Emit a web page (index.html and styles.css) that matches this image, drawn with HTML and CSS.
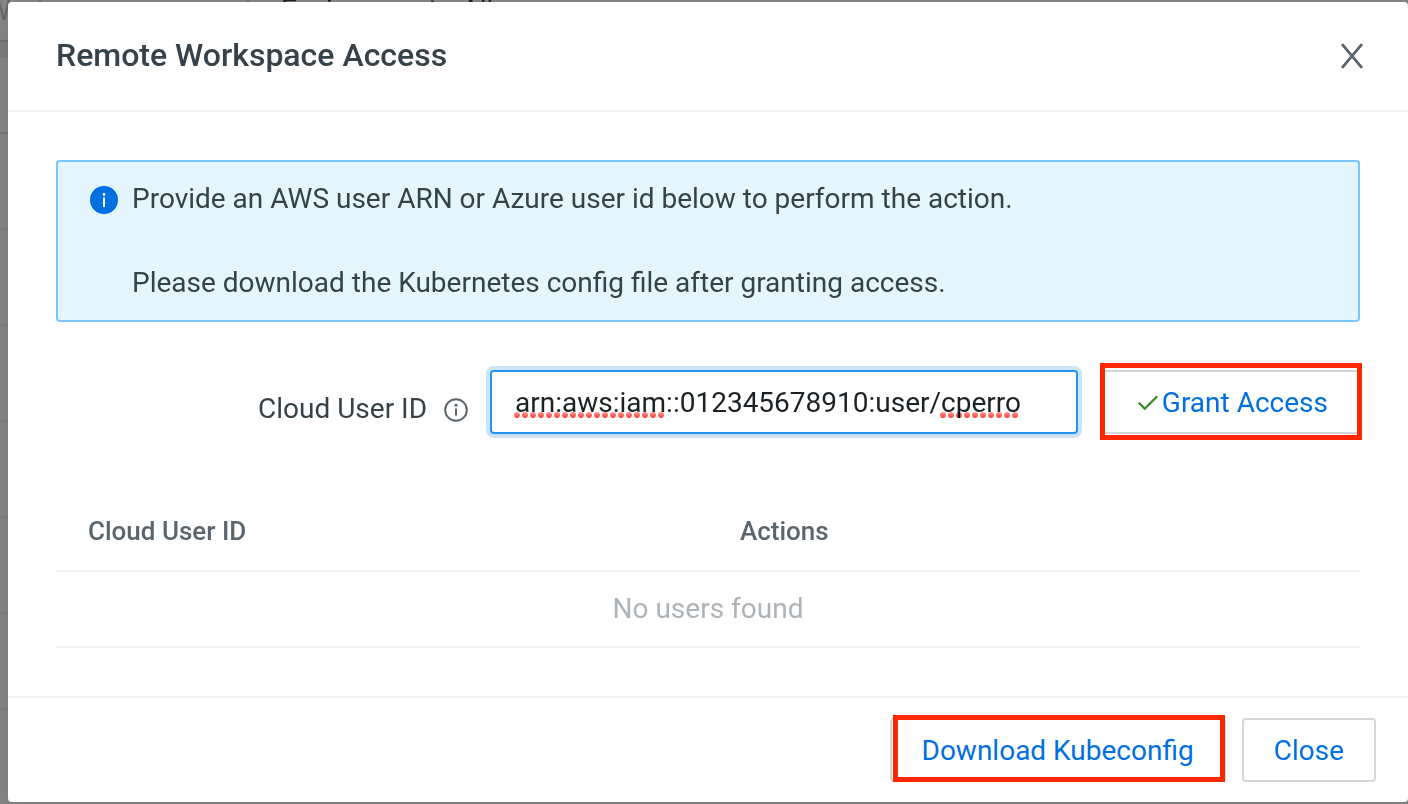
FILE: index.html
```
<!DOCTYPE html>
<html lang="en">

<head>
    <meta charset="UTF-8">
    <meta name="viewport" content="width=device-width, initial-scale=1.0">
    <title>Remote Workspace Access</title>
    <link rel="stylesheet" href="styles.css">
</head>

<body>

    <!-- Page behind the dialog -->
    <div class="page" aria-hidden="true">
        <div class="page-toolbar">
            <span class="search-hint">W</span>
            <span class="search-box"></span>
            <span class="env-filter"><span>Environment</span><span>All</span></span>
        </div>
        <div class="page-head"></div>
        <div class="page-row"></div>
        <div class="page-row"></div>
        <div class="page-row"></div>
        <div class="page-row"></div>
        <div class="page-row"></div>
        <div class="page-row"></div>
    </div>

    <div class="modal" role="dialog" aria-labelledby="modalTitle">
        <header class="modal-header">
            <h2 id="modalTitle">Remote Workspace Access</h2>
            <button class="close-icon" type="button" aria-label="Close dialog">
                <svg width="28" height="28" viewBox="0 0 28 28" fill="none" stroke="#5a656d" stroke-width="2.8">
                    <path d="M4 2.2L24 25.8M24 2.2L4 25.8" />
                </svg>
            </button>
        </header>

        <div class="modal-body">
            <div class="alert">
                <svg class="alert-icon" width="28" height="28" viewBox="0 0 28 28">
                    <circle cx="14" cy="14" r="14" fill="#0070e0" />
                    <circle cx="14" cy="8.5" r="1.4" fill="#fff" />
                    <rect x="13" y="11.5" width="2" height="9.5" fill="#fff" />
                </svg>
                <div class="alert-text">
                    <p>Provide an AWS user ARN or Azure user id below to perform the action.</p>
                    <p>Please download the Kubernetes config file after granting access.</p>
                </div>
            </div>

            <form class="grant-form">
                <label for="cloudUserId">Cloud User ID</label>
                <svg class="hint-icon" width="24" height="24" viewBox="0 0 24 24">
                    <circle cx="12" cy="12" r="10.8" fill="none" stroke="#5a656d" stroke-width="2" />
                    <circle cx="12" cy="7.3" r="1.5" fill="#5a656d" />
                    <rect x="11" y="10.6" width="2" height="7" fill="#5a656d" />
                </svg>
                <div class="input-wrap">
                    <input id="cloudUserId" type="text" value="arn:aws:iam::012345678910:user/cperro" spellcheck="false">
                    <svg class="misspelled" width="506" height="6" aria-hidden="true">
                        <defs>
                            <linearGradient id="dot" x1="0" y1="0" x2="0" y2="1">
                                <stop offset="0" stop-color="#ff9c96" />
                                <stop offset="1" stop-color="#fb3a30" />
                            </linearGradient>
                            <pattern id="dots" width="8" height="6" patternUnits="userSpaceOnUse">
                                <circle cx="3" cy="3" r="3" fill="url(#dot)" />
                            </pattern>
                        </defs>
                        <rect width="150" height="6" fill="url(#dots)" />
                        <rect width="78" height="6" fill="url(#dots)" transform="translate(426 0)" />
                    </svg>
                </div>
                <div class="highlight grant">
                    <button class="btn" type="button">
                        <svg width="20" height="16" viewBox="0 0 20 16" fill="none" stroke="#2f8a1f" stroke-width="2.2">
                            <path d="M.8 7.8L6.8 13.8L19.2 1.2" />
                        </svg>
                        Grant Access
                    </button>
                </div>
            </form>

            <table class="users">
                <thead>
                    <tr>
                        <th>Cloud User ID</th>
                        <th>Actions</th>
                    </tr>
                </thead>
                <tbody>
                    <tr>
                        <td colspan="2">No users found</td>
                    </tr>
                </tbody>
            </table>
        </div>

        <footer class="modal-footer">
            <div class="highlight download">
                <button class="btn" type="button">Download Kubeconfig</button>
            </div>
            <button class="btn" type="button">Close</button>
        </footer>
    </div>

</body>

</html>
```

FILE: styles.css
```
* {
    box-sizing: border-box;
}

body {
    font-family: Roboto, sans-serif;
    font-size: 28px;
    line-height: 42px;
    color: #36424a;
    background: #868686;
    margin: 0;
    padding: 2px 0 2px 8px;
    min-height: 100vh;
    overflow: hidden;
}

/* Dimmed page */
.page {
    position: absolute;
    inset: 0;
    overflow: hidden;
    background: #868686;
}

.page-toolbar {
    display: flex;
    height: 42px;
    border-bottom: 2px solid #717171;
    color: #666;
    line-height: 22px;
}

.search-hint {
    width: 54px;
    margin-left: -14px;
}

.search-box {
    width: 210px;
    margin-left: -1px;
    border: 2px solid #717171;
    border-width: 0 2px;
}

.env-filter {
    display: flex;
    gap: 24px;
    margin-left: 32px;
    line-height: 20px;
    color: #1c2125;
}

.page-head {
    height: 92px;
    border-top: 16px solid #7b7e7d;
    border-bottom: 2px solid #747474;
}

.page-row {
    height: 96px;
    border-bottom: 2px solid #7e7e7e;
}

/* Modal */
.modal {
    position: relative;
    background: white;
    border-radius: 4px;
    box-shadow: 0 8px 24px rgba(0, 0, 0, 0.1);
}

.modal-header {
    display: flex;
    justify-content: space-between;
    align-items: center;
    height: 110px;
    padding: 0 42px 0 48px;
    border-bottom: 2px solid #f4f4f4;
}

h2 {
    margin: 0;
    padding-bottom: 2px;
    font-size: 32px;
    font-weight: 500;
}

.close-icon {
    display: flex;
    padding: 0;
    border: none;
    background: none;
    cursor: pointer;
}

.modal-body {
    padding: 48px;
}

.alert {
    display: flex;
    gap: 14px;
    padding: 16px 32px;
    background: #e5f5fe;
    border: 2px solid #78c6fc;
    border-radius: 4px;
}

.alert-icon {
    flex: none;
    margin-top: 8px;
}

.alert p {
    margin: 0 0 42px;
}

.alert p:last-child {
    margin-bottom: 0;
}

/* Grant access form */
.grant-form {
    display: flex;
    align-items: center;
    margin-top: 48px;
    padding-left: 202px;
}

.grant-form label {
    margin-top: 14px;
}

.hint-icon {
    flex: none;
    margin: 16px 22px 0 17px;
}

.input-wrap {
    position: relative;
    flex: 1;
    margin-right: 24px;
}

.input-wrap input {
    display: block;
    width: 100%;
    height: 64px;
    padding: 0 23px;
    font: inherit;
    color: #1c2125;
    background: white;
    border: 2px solid #2492ef;
    border-radius: 4px;
    outline: none;
    box-shadow: 0 0 0 4px #cbe2f9;
}

.misspelled {
    position: absolute;
    left: 24px;
    top: 42px;
    mix-blend-mode: multiply;
}

.btn {
    display: flex;
    align-items: center;
    justify-content: center;
    gap: 4px;
    height: 64px;
    padding: 2px 30px 0;
    font: inherit;
    color: #0070e0;
    background: white;
    border: 2px solid #d5d7da;
    border-radius: 4px;
    cursor: pointer;
}

.grant .btn {
    padding-left: 34px;
}

/* Red frame over a button */
.highlight {
    position: relative;
}

.highlight::after {
    content: "";
    position: absolute;
    border: 5px solid #ff2600;
    pointer-events: none;
}

.grant::after {
    inset: -7px -2px -6px;
}

.download::after {
    inset: -3px 1px 0 3px;
}

/* Users table */
.users {
    width: 100%;
    margin-top: 58px;
    border-collapse: collapse;
    table-layout: fixed;
}

.users th {
    padding: 18px 32px;
    font-size: 26px;
    font-weight: 500;
    color: #5a656d;
    text-align: left;
    border-bottom: 2px solid #f4f4f4;
}

.users td {
    padding: 16px 32px;
    color: #aeb3b7;
    text-align: center;
    border-bottom: 2px solid #f4f4f4;
}

.modal-footer {
    display: flex;
    align-items: center;
    justify-content: flex-end;
    gap: 16px;
    height: 106px;
    padding: 0 32px;
    border-top: 2px solid #f4f4f4;
}
```
